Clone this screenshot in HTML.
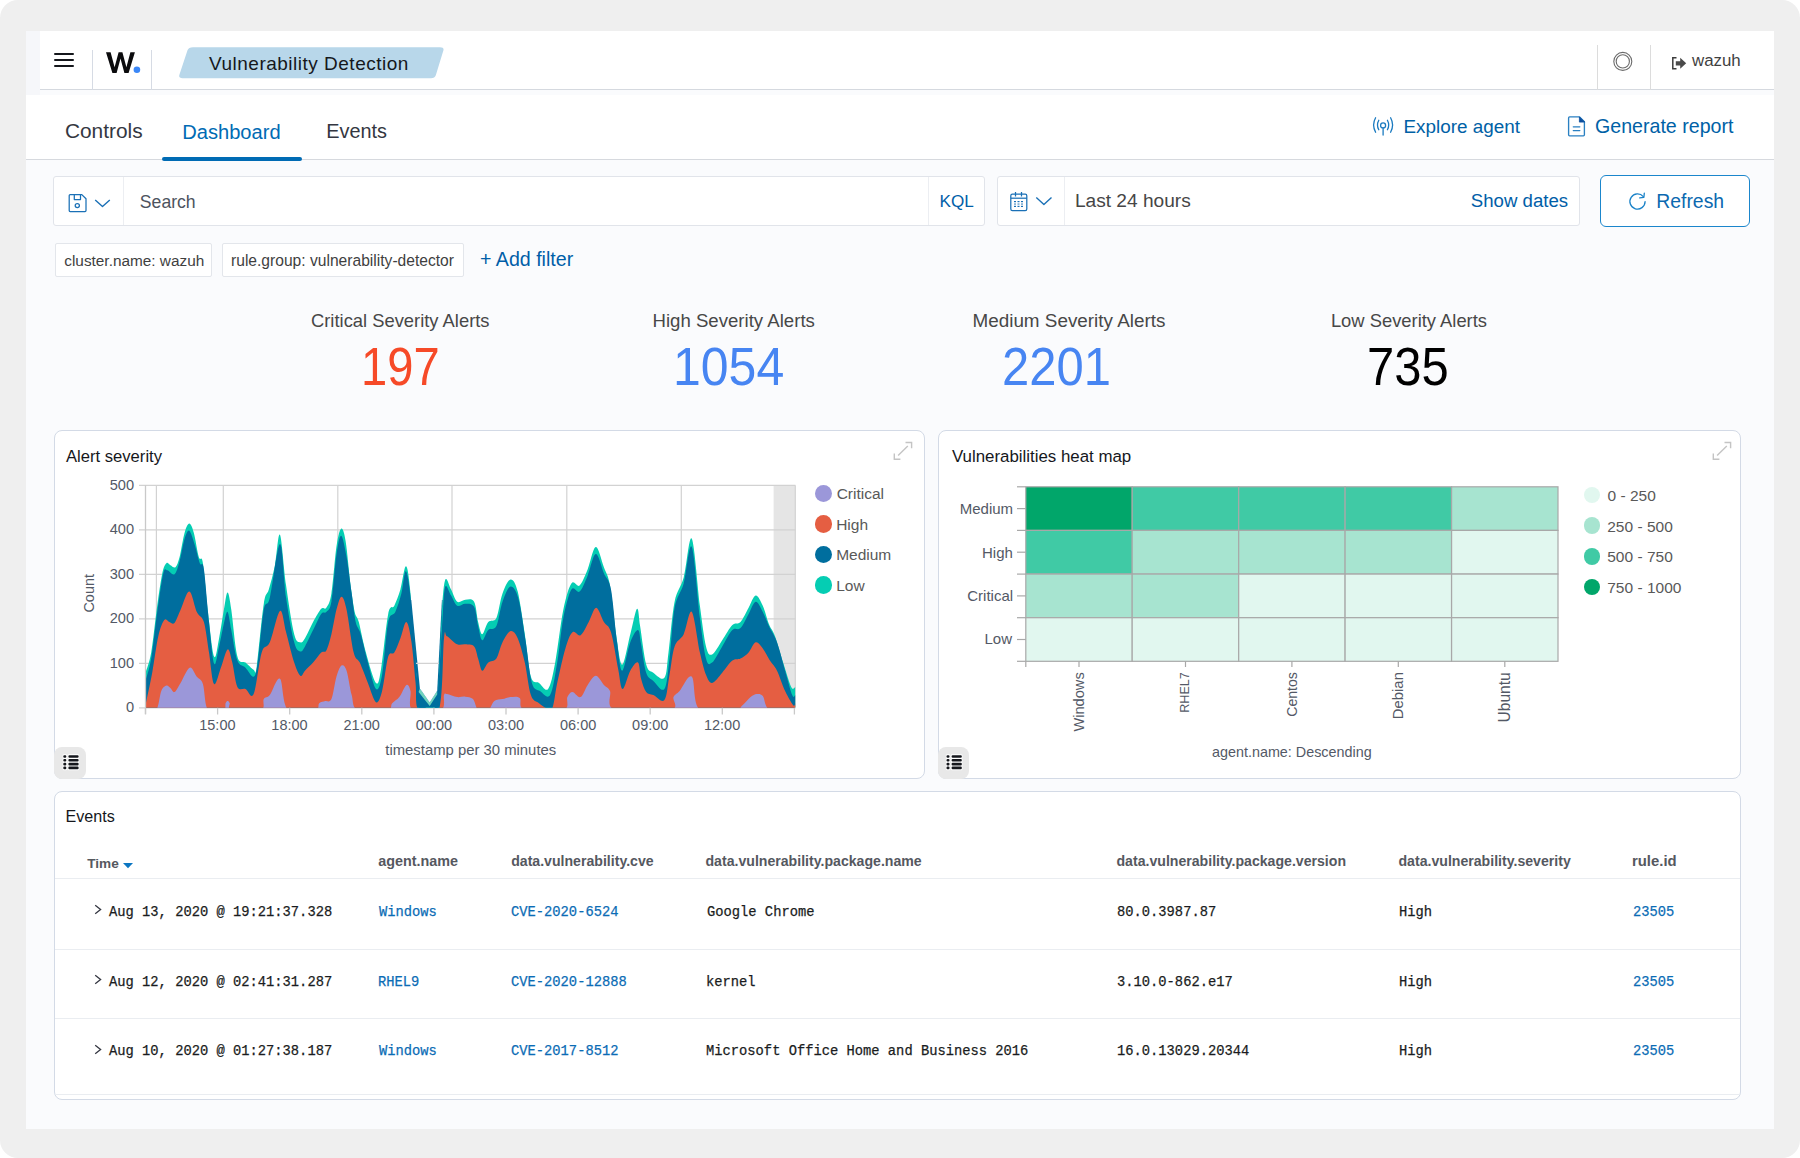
<!DOCTYPE html>
<html><head><meta charset="utf-8">
<style>
*{box-sizing:border-box;margin:0;padding:0}
html,body{width:1800px;height:1158px;overflow:hidden;background:#fff;font-family:"Liberation Sans",sans-serif;}
.abs{position:absolute}
.t{position:absolute;white-space:nowrap;line-height:1}
</style></head><body>
<div class="abs" style="left:0px;top:0px;width:1800px;height:1158px;background:#efefef;border-radius:18px"></div>
<div class="abs" style="left:26px;top:31px;width:1748px;height:1098px;background:#fafbfd"></div>
<div class="abs" style="left:40px;top:31px;width:1733.5px;height:59px;background:#fff;border-bottom:1.2px solid #d5d9df"></div>
<div class="abs" style="left:26px;top:31px;width:14px;height:64px;background:#f6f7fa"></div>
<div class="abs" style="left:26px;top:95px;width:1748px;height:65px;background:#fff;border-bottom:1.2px solid #d6d9de"></div>
<div class="abs" style="left:54.3px;top:52.6px;width:19.7px;height:2.3px;background:#15171c;border-radius:1px"></div>
<div class="abs" style="left:54.3px;top:58.8px;width:19.7px;height:2.3px;background:#15171c;border-radius:1px"></div>
<div class="abs" style="left:54.3px;top:65.0px;width:19.7px;height:2.3px;background:#15171c;border-radius:1px"></div>
<div class="abs" style="left:92px;top:50px;width:1px;height:39.5px;background:#d6dbe4"></div>
<div class="abs" style="left:151px;top:50px;width:1px;height:39.5px;background:#d6dbe4"></div>
<svg class="abs" style="left:0;top:0" width="1800" height="200" viewBox="0 0 1800 200">
<path d="M106,52.2 L110.6,52.2 L114.6,67.2 L118.6,52.2 L122.4,52.2 L126.4,67.2 L130.4,52.2 L134.9,52.2 L128.6,73 L124.4,73 L120.5,58.6 L116.6,73 L112.4,73 Z" fill="#0b0b0d"/>
<circle cx="136.9" cy="69.7" r="3.3" fill="#3b87f7"/>
<path d="M193,47.2 L440,47.2 Q444.5,47.2 443.3,50.8 L435.8,75.2 Q434.8,78.2 431,78.2 L182.5,78.2 Q178.3,78.2 179.4,74.8 L187.5,50.2 Q188.6,47.2 193,47.2 Z" fill="#b8d7ea"/>
<circle cx="1622.8" cy="61.4" r="9" fill="none" stroke="#6b6b6b" stroke-width="1.1"/>
<circle cx="1622.8" cy="61.4" r="6.6" fill="none" stroke="#6b6b6b" stroke-width="1.1"/>
<path d="M1676.5,57.8 L1672.8,57.8 L1672.8,68.8 L1676.5,68.8" fill="none" stroke="#3c3c3c" stroke-width="1.5"/>
<path d="M1675.8,61.2 L1680.2,61.2 L1680.2,57.8 L1686.2,63.3 L1680.2,68.8 L1680.2,65.4 L1675.8,65.4 Z" fill="#4a4a4a"/>
</svg>
<div class="t" style="left:209.00px;top:54.35px;font-size:19.00px;font-family:'Liberation Sans',sans-serif;color:#15171c;letter-spacing:0.500px;">Vulnerability Detection</div>
<div class="abs" style="left:1597px;top:45px;width:1px;height:44.5px;background:#dcdcdc"></div>
<div class="abs" style="left:1650px;top:45px;width:1px;height:44.5px;background:#dcdcdc"></div>
<div class="t" style="left:1692.00px;top:52.96px;font-size:16.87px;font-family:'Liberation Sans',sans-serif;color:#3f3f3f;">wazuh</div>
<div class="t" style="left:64.90px;top:121.06px;font-size:20.87px;font-family:'Liberation Sans',sans-serif;color:#343741;">Controls</div>
<div class="t" style="left:182.20px;top:121.69px;font-size:20.12px;font-family:'Liberation Sans',sans-serif;color:#006bb4;">Dashboard</div>
<div class="t" style="left:326.30px;top:121.91px;font-size:19.87px;font-family:'Liberation Sans',sans-serif;color:#343741;">Events</div>
<div class="abs" style="left:162px;top:157px;width:140px;height:3.5px;background:#006bb4;border-radius:2px"></div>
<svg class="abs" style="left:0;top:0" width="1800" height="300" viewBox="0 0 1800 300">
<g fill="none" stroke="#1a7ac0" stroke-width="1.3" stroke-linecap="round">
<circle cx="1383.1" cy="125.4" r="2.5"/>
<path d="M1383.1,127.9 L1383.1,135"/>
<path d="M1378.8,120.2 Q1376.2,125 1378.8,129.8"/>
<path d="M1387.4,120.2 Q1390,125 1387.4,129.8"/>
<path d="M1375.6,117.8 Q1371.6,125 1375.6,132.2"/>
<path d="M1390.6,117.8 Q1394.6,125 1390.6,132.2"/>
</g>
<g fill="none" stroke="#2a80c2" stroke-width="1.35" stroke-linejoin="round">
<path d="M1569.6,116.9 L1579.6,116.9 L1584.4,121.7 L1584.4,134.8 Q1584.4,135.8 1583.4,135.8 L1569.6,135.8 Q1568.6,135.8 1568.6,134.8 L1568.6,117.9 Q1568.6,116.9 1569.6,116.9 Z"/>
<path d="M1573.3,126.8 L1579.8,126.8 M1573.3,130.6 L1579.8,130.6" stroke-linecap="round"/>
</g>
<path d="M1579.4,116.9 L1584.6,122.1 L1579.4,122.1 Z" fill="#0d4f9e" stroke="#0d4f9e" stroke-width="0.8" stroke-linejoin="round"/>
</svg>
<div class="t" style="left:1403.50px;top:117.76px;font-size:18.87px;font-family:'Liberation Sans',sans-serif;color:#0061a6;">Explore agent</div>
<div class="t" style="left:1595.00px;top:117.12px;font-size:19.62px;font-family:'Liberation Sans',sans-serif;color:#0061a6;">Generate report</div>
<div class="abs" style="left:53px;top:176px;width:932px;height:50px;background:#fff;border:1px solid #e1e4ea;border-radius:3px"></div>
<div class="abs" style="left:123px;top:177px;width:1px;height:48px;background:#eceef2"></div>
<div class="abs" style="left:928px;top:177px;width:1px;height:48px;background:#eceef2"></div>
<div class="abs" style="left:997px;top:176px;width:583px;height:50px;background:#fff;border:1px solid #e1e4ea;border-radius:3px"></div>
<div class="abs" style="left:1064px;top:177px;width:1px;height:48px;background:#eceef2"></div>
<div class="abs" style="left:1600px;top:175px;width:150px;height:51.5px;background:#fff;border:1.6px solid #1b86cc;border-radius:6px"></div>
<svg class="abs" style="left:0;top:0" width="1800" height="300" viewBox="0 0 1800 300"><g fill="none" stroke="#1a70b6" stroke-width="1.25" stroke-linejoin="round">
<path d="M70.2,194.6 L81.8,194.6 L86,198.8 L86,210.5 Q86,211.5 85,211.5 L70.2,211.5 Q69.2,211.5 69.2,210.5 L69.2,195.6 Q69.2,194.6 70.2,194.6 Z"/>
<path d="M74.3,194.6 L74.3,199.6 L80.5,199.6 L80.5,194.6"/>
<circle cx="77.3" cy="205.6" r="2.1"/>
<path d="M95.2,200 L102.5,206.6 L109.8,200" stroke-width="1.4"/>
<rect x="1010.8" y="194.2" width="16" height="16.5" rx="1.6"/>
<path d="M1010.8,198.2 L1026.8,198.2"/>
<path d="M1015.5,192 L1015.5,196.6 M1021.5,192 L1021.5,196.6"/>
<path d="M1036.3,197.6 L1043.9,204.4 L1051.5,197.6" stroke-width="1.4"/>
</g>
<path d="M1645.1,201.6 A7.6,7.6 0 1 1 1643.3,196.6" fill="none" stroke="#1a82c8" stroke-width="1.3" stroke-linecap="round"/>
<path d="M1639.7,197.8 L1643.9,197.3 L1644.3,193.2" fill="none" stroke="#1a82c8" stroke-width="1.3" stroke-linecap="round" stroke-linejoin="round"/>
<g fill="#1a70b6">
<rect x="1014" y="201" width="2" height="1.2"/><rect x="1017.5" y="201" width="2" height="1.2"/><rect x="1021" y="201" width="2" height="1.2"/>
<rect x="1014" y="203.3" width="2" height="1.5" opacity="0.6"/><rect x="1017.5" y="203.3" width="2" height="1.5" opacity="0.6"/><rect x="1021" y="203.3" width="2" height="1.5" opacity="0.6"/>
<rect x="1014" y="205.8" width="2" height="1.2"/><rect x="1017.5" y="205.8" width="2" height="1.2"/><rect x="1021" y="205.8" width="2" height="1.2"/>
</g>
</svg>
<div class="t" style="left:139.85px;top:193.52px;font-size:17.62px;font-family:'Liberation Sans',sans-serif;color:#4d535e;">Search</div>
<div class="t" style="left:939.55px;top:193.44px;font-size:17.12px;font-family:'Liberation Sans',sans-serif;color:#005ea8;">KQL</div>
<div class="t" style="left:1074.90px;top:191.44px;font-size:19.12px;font-family:'Liberation Sans',sans-serif;color:#464646;">Last 24 hours</div>
<div class="t" style="left:1470.85px;top:192.17px;font-size:18.62px;font-family:'Liberation Sans',sans-serif;color:#005ea8;">Show dates</div>
<div class="t" style="left:1656.30px;top:192.03px;font-size:19.37px;font-family:'Liberation Sans',sans-serif;color:#0b69b0;">Refresh</div>
<div class="abs" style="left:55px;top:243px;width:157px;height:34px;background:#fff;border:1px solid #e3e6eb;border-radius:2px"></div>
<div class="abs" style="left:222px;top:243px;width:242px;height:34px;background:#fff;border:1px solid #e3e6eb;border-radius:2px"></div>
<div class="t" style="left:64.25px;top:253.13px;font-size:15.37px;font-family:'Liberation Sans',sans-serif;color:#3f3f3f;">cluster.name: wazuh</div>
<div class="t" style="left:231.00px;top:252.92px;font-size:15.62px;font-family:'Liberation Sans',sans-serif;color:#3f3f3f;">rule.group: vulnerability-detector</div>
<div class="t" style="left:480.00px;top:249.82px;font-size:19.62px;font-family:'Liberation Sans',sans-serif;color:#005ea8;">+ Add filter</div>
<div class="t" style="left:311.00px;top:311.98px;font-size:18.37px;font-family:'Liberation Sans',sans-serif;color:#474747;">Critical Severity Alerts</div>
<div class="t" style="left:652.50px;top:311.77px;font-size:18.62px;font-family:'Liberation Sans',sans-serif;color:#474747;">High Severity Alerts</div>
<div class="t" style="left:972.50px;top:311.56px;font-size:18.87px;font-family:'Liberation Sans',sans-serif;color:#474747;">Medium Severity Alerts</div>
<div class="t" style="left:1330.90px;top:311.98px;font-size:18.37px;font-family:'Liberation Sans',sans-serif;color:#474747;">Low Severity Alerts</div>
<div class="t" style="left:360.81px;top:338.60px;font-size:54.00px;font-family:'Liberation Sans',sans-serif;color:#f64a28;transform:scaleX(0.8733);transform-origin:0 0;">197</div>
<div class="t" style="left:673.30px;top:338.60px;font-size:54.00px;font-family:'Liberation Sans',sans-serif;color:#4785f2;transform:scaleX(0.9258);transform-origin:0 0;">1054</div>
<div class="t" style="left:1001.51px;top:338.60px;font-size:54.00px;font-family:'Liberation Sans',sans-serif;color:#4785f2;transform:scaleX(0.9063);transform-origin:0 0;">2201</div>
<div class="t" style="left:1366.51px;top:338.60px;font-size:54.00px;font-family:'Liberation Sans',sans-serif;color:#000;transform:scaleX(0.9059);transform-origin:0 0;">735</div>
<div class="abs" style="left:54px;top:430px;width:870.5px;height:348.8px;background:#fff;border:1px solid #d3dae6;border-radius:8px"></div>
<div class="abs" style="left:937.5px;top:430px;width:803.5px;height:348.8px;background:#fff;border:1px solid #d3dae6;border-radius:8px"></div>
<div class="abs" style="left:54px;top:791px;width:1687px;height:308.5px;background:#fff;border:1px solid #d3dae6;border-radius:8px"></div>
<div class="t" style="left:66.00px;top:448.97px;font-size:16.62px;font-family:'Liberation Sans',sans-serif;color:#15171c;">Alert severity</div>
<div class="t" style="left:951.90px;top:448.66px;font-size:16.87px;font-family:'Liberation Sans',sans-serif;color:#15171c;">Vulnerabilities heat map</div>
<svg class="abs" style="left:893px;top:441px" width="21" height="20" viewBox="0 0 21 20"><g fill="none" stroke="#c4c4c4" stroke-width="1.4" stroke-linecap="square"><path d="M5.6,14 L14.3,5.4"/><path d="M13.2,1.5 L18.6,1.5 L18.6,6.6"/><path d="M1.3,13.3 L1.3,18.3 L6.7,18.3"/></g></svg>
<svg class="abs" style="left:1712px;top:441px" width="21" height="20" viewBox="0 0 21 20"><g fill="none" stroke="#c4c4c4" stroke-width="1.4" stroke-linecap="square"><path d="M5.6,14 L14.3,5.4"/><path d="M13.2,1.5 L18.6,1.5 L18.6,6.6"/><path d="M1.3,13.3 L1.3,18.3 L6.7,18.3"/></g></svg>
<div class="abs" style="left:54.4px;top:747.3px;width:31.3px;height:31.3px;background:#e8e8e8;border-radius:8px"></div>
<svg class="abs" style="left:0;top:0" width="1800" height="1158" viewBox="0 0 1800 1158"><rect x="62.7" y="754.2" width="4.4" height="4.6" rx="1.2" fill="#fff"/><rect x="67.6" y="754.2" width="11.6" height="4.6" rx="1.2" fill="#fff"/><rect x="62.7" y="758.0" width="4.4" height="4.6" rx="1.2" fill="#fff"/><rect x="67.6" y="758.0" width="11.6" height="4.6" rx="1.2" fill="#fff"/><rect x="62.7" y="761.8" width="4.4" height="4.6" rx="1.2" fill="#fff"/><rect x="67.6" y="761.8" width="11.6" height="4.6" rx="1.2" fill="#fff"/><rect x="62.7" y="765.6" width="4.4" height="4.6" rx="1.2" fill="#fff"/><rect x="67.6" y="765.6" width="11.6" height="4.6" rx="1.2" fill="#fff"/><rect x="63.3" y="755.2" width="3" height="2.6" rx="1" fill="#15171c"/><rect x="68.4" y="755.2" width="10.2" height="2.6" rx="1" fill="#15171c"/><rect x="63.3" y="759.0" width="3" height="2.6" rx="1" fill="#15171c"/><rect x="68.4" y="759.0" width="10.2" height="2.6" rx="1" fill="#15171c"/><rect x="63.3" y="762.8" width="3" height="2.6" rx="1" fill="#15171c"/><rect x="68.4" y="762.8" width="10.2" height="2.6" rx="1" fill="#15171c"/><rect x="63.3" y="766.6" width="3" height="2.6" rx="1" fill="#15171c"/><rect x="68.4" y="766.6" width="10.2" height="2.6" rx="1" fill="#15171c"/></svg>
<div class="abs" style="left:937.6px;top:747.3px;width:31.3px;height:31.3px;background:#e8e8e8;border-radius:8px"></div>
<svg class="abs" style="left:0;top:0" width="1800" height="1158" viewBox="0 0 1800 1158"><rect x="945.9" y="754.2" width="4.4" height="4.6" rx="1.2" fill="#fff"/><rect x="950.8" y="754.2" width="11.6" height="4.6" rx="1.2" fill="#fff"/><rect x="945.9" y="758.0" width="4.4" height="4.6" rx="1.2" fill="#fff"/><rect x="950.8" y="758.0" width="11.6" height="4.6" rx="1.2" fill="#fff"/><rect x="945.9" y="761.8" width="4.4" height="4.6" rx="1.2" fill="#fff"/><rect x="950.8" y="761.8" width="11.6" height="4.6" rx="1.2" fill="#fff"/><rect x="945.9" y="765.6" width="4.4" height="4.6" rx="1.2" fill="#fff"/><rect x="950.8" y="765.6" width="11.6" height="4.6" rx="1.2" fill="#fff"/><rect x="946.5" y="755.2" width="3" height="2.6" rx="1" fill="#15171c"/><rect x="951.6" y="755.2" width="10.2" height="2.6" rx="1" fill="#15171c"/><rect x="946.5" y="759.0" width="3" height="2.6" rx="1" fill="#15171c"/><rect x="951.6" y="759.0" width="10.2" height="2.6" rx="1" fill="#15171c"/><rect x="946.5" y="762.8" width="3" height="2.6" rx="1" fill="#15171c"/><rect x="951.6" y="762.8" width="10.2" height="2.6" rx="1" fill="#15171c"/><rect x="946.5" y="766.6" width="3" height="2.6" rx="1" fill="#15171c"/><rect x="951.6" y="766.6" width="10.2" height="2.6" rx="1" fill="#15171c"/></svg>
<svg class="abs" style="left:0;top:0" width="1800" height="1158" viewBox="0 0 1800 1158">
<rect x="773.6" y="485.4" width="21.7" height="221.6" fill="#e5e5e5"/>
<line x1="139" y1="485.4" x2="795.5" y2="485.4" stroke="#d2d2d2" stroke-width="1.2"/>
<line x1="139" y1="529.9" x2="795.5" y2="529.9" stroke="#d2d2d2" stroke-width="1.2"/>
<line x1="139" y1="574.4" x2="795.5" y2="574.4" stroke="#d2d2d2" stroke-width="1.2"/>
<line x1="139" y1="618.8" x2="795.5" y2="618.8" stroke="#d2d2d2" stroke-width="1.2"/>
<line x1="139" y1="663.3" x2="795.5" y2="663.3" stroke="#d2d2d2" stroke-width="1.2"/>
<line x1="139" y1="707.8" x2="795.5" y2="707.8" stroke="#d2d2d2" stroke-width="1.2"/>
<line x1="156.4" y1="485.4" x2="156.4" y2="707" stroke="#d2d2d2" stroke-width="1.2"/>
<line x1="223.3" y1="485.4" x2="223.3" y2="707" stroke="#d2d2d2" stroke-width="1.2"/>
<line x1="337.8" y1="485.4" x2="337.8" y2="707" stroke="#d2d2d2" stroke-width="1.2"/>
<line x1="452" y1="485.4" x2="452" y2="707" stroke="#d2d2d2" stroke-width="1.2"/>
<line x1="566.8" y1="485.4" x2="566.8" y2="707" stroke="#d2d2d2" stroke-width="1.2"/>
<line x1="681.3" y1="485.4" x2="681.3" y2="707" stroke="#d2d2d2" stroke-width="1.2"/>
<line x1="795.3" y1="485.4" x2="795.3" y2="707" stroke="#d2d2d2" stroke-width="1.2"/>
<defs><clipPath id="ca"><rect x="144.8" y="480" width="650.7" height="227.8"/></clipPath></defs><g clip-path="url(#ca)">
<path d="M145.5,710.0 L145.5,672.7 C146.4,669.4 149.2,663.6 151.2,652.4 C153.1,641.3 155.4,619.0 157.2,605.8 C159.1,592.6 160.8,580.4 162.3,573.3 C163.8,566.2 165.0,564.5 166.4,563.2 C167.7,561.8 168.9,564.5 170.4,565.2 C172.0,565.9 174.0,568.6 175.5,567.2 C177.0,565.9 178.0,562.8 179.6,557.1 C181.1,551.3 183.0,538.3 184.6,532.7 C186.3,527.2 187.8,523.6 189.3,523.6 C190.8,523.6 192.2,527.2 193.8,532.7 C195.4,538.3 197.3,552.0 198.8,557.1 C200.4,562.2 201.4,554.1 202.9,563.2 C204.4,572.3 206.1,596.3 208.0,611.9 C209.8,627.4 212.2,652.1 214.1,656.5 C215.9,660.9 217.4,646.4 219.1,638.2 C220.8,630.1 222.8,615.4 224.2,607.8 C225.6,600.2 226.5,592.3 227.6,592.6 C228.8,592.9 229.7,599.2 231.3,609.8 C232.9,620.5 235.0,647.7 237.4,656.5 C239.7,665.3 242.8,660.4 245.5,662.6 C248.2,664.8 251.8,669.0 253.6,669.7 C255.5,670.4 255.0,677.6 256.7,666.7 C258.3,655.7 261.7,616.6 263.8,603.8 C265.8,590.9 267.0,596.0 268.8,589.6 C270.7,583.1 273.1,574.3 274.9,565.2 C276.8,556.1 278.1,531.4 280.0,534.8 C281.8,538.2 283.7,568.9 286.1,585.5 C288.4,602.1 291.8,624.7 294.2,634.2 C296.6,643.7 298.5,641.6 300.3,642.3 C302.1,643.0 302.9,641.6 305.0,638.2 C307.1,634.9 310.4,626.9 313.1,622.0 C315.8,617.1 319.0,611.2 321.2,608.8 C323.4,606.5 324.6,610.4 326.3,607.8 C328.0,605.3 329.7,603.8 331.4,593.6 C333.1,583.5 334.8,557.8 336.4,547.0 C338.1,536.1 339.6,529.7 341.1,528.7 C342.6,527.7 344.0,531.4 345.6,540.9 C347.2,550.3 349.1,573.7 350.6,585.5 C352.2,597.3 353.4,605.8 354.7,611.9 C356.1,618.0 356.9,615.3 358.8,622.0 C360.6,628.8 363.0,642.3 365.9,652.4 C368.7,662.6 373.5,680.2 376.0,682.9 C378.5,685.6 379.1,680.2 381.1,668.7 C383.1,657.2 386.0,624.4 388.2,613.9 C390.4,603.4 392.2,609.8 394.3,605.8 C396.3,601.7 398.4,596.1 400.4,589.6 C402.3,583.0 404.3,565.5 406.0,566.2 C407.7,566.9 408.7,574.8 410.5,593.6 C412.3,612.4 414.6,661.9 416.6,678.8 C418.6,695.7 420.5,691.2 422.7,695.1 C424.9,698.9 427.4,702.2 429.8,702.2 C432.1,702.2 435.0,708.4 436.9,695.1 C438.7,681.7 439.6,641.1 440.9,622.0 C442.3,602.9 443.3,585.8 445.0,580.4 C446.7,575.0 449.0,586.0 451.1,589.6 C453.1,593.1 454.8,600.0 457.2,601.7 C459.5,603.4 462.5,599.7 465.3,599.7 C468.1,599.7 471.9,598.0 474.1,601.7 C476.2,605.4 476.8,616.6 478.1,622.0 C479.5,627.4 480.5,634.2 482.2,634.2 C483.9,634.2 485.9,624.7 488.3,622.0 C490.6,619.3 494.0,622.7 496.4,618.0 C498.7,613.2 500.1,600.0 502.5,593.6 C504.8,587.2 508.0,579.7 510.6,579.4 C513.1,579.1 515.3,582.5 517.7,591.6 C520.0,600.7 522.6,620.0 524.8,634.2 C527.0,648.4 528.5,668.7 530.9,676.8 C533.2,684.9 536.1,680.9 539.0,682.9 C541.9,684.9 545.4,692.3 548.1,689.0 C550.8,685.6 552.7,675.8 555.2,662.6 C557.7,649.4 560.6,623.0 563.3,609.8 C566.0,596.7 568.7,587.5 571.4,583.5 C574.1,579.4 576.9,587.9 579.6,585.5 C582.3,583.1 585.0,575.7 587.7,569.3 C590.4,562.8 593.1,547.3 595.8,547.0 C598.5,546.6 601.5,560.8 603.9,567.2 C606.3,573.7 608.0,574.3 610.0,585.5 C612.0,596.7 614.0,621.0 616.1,634.2 C618.1,647.4 619.8,664.6 622.2,664.6 C624.5,664.6 627.8,643.5 630.3,634.2 C632.8,624.9 635.4,610.2 637.0,608.8 C638.7,607.5 638.6,616.8 640.1,626.1 C641.6,635.4 644.0,656.8 646.2,664.6 C648.4,672.4 650.2,670.5 653.3,672.7 C656.3,674.9 661.9,681.2 664.4,677.8 C667.0,674.4 666.8,665.1 668.5,652.4 C670.2,639.8 672.0,614.2 674.6,601.7 C677.1,589.2 680.8,587.9 683.7,577.4 C686.6,566.9 689.1,534.1 691.8,538.8 C694.5,543.6 697.6,587.9 699.9,605.8 C702.3,623.7 704.0,638.2 706.0,646.4 C708.0,654.5 709.4,655.5 712.1,654.5 C714.8,653.5 718.9,645.2 722.2,640.3 C725.6,635.4 729.3,628.1 732.4,625.1 C735.4,622.0 737.8,624.9 740.5,622.0 C743.2,619.1 746.1,612.2 748.6,607.8 C751.1,603.4 753.3,596.0 755.7,595.6 C758.1,595.3 760.6,601.1 762.8,605.8 C765.0,610.5 766.9,619.0 768.9,624.0 C770.9,629.1 772.6,629.8 775.0,636.2 C777.4,642.6 780.4,654.1 783.1,662.6 C785.8,671.0 789.2,682.9 791.2,686.9 C793.2,691.0 794.6,686.9 795.3,686.9 L795.3,710.0 Z" fill="#05cdb3"/>
<path d="M145.5,710.0 L145.5,680.9 C146.4,677.1 149.2,670.0 151.2,658.5 C153.1,647.0 155.2,626.1 157.2,611.9 C159.3,597.7 161.6,580.3 163.3,573.3 C165.0,566.4 165.5,570.1 167.4,570.3 C169.2,570.5 172.5,575.9 174.5,574.3 C176.5,572.8 177.9,567.1 179.6,561.2 C181.3,555.2 183.0,543.9 184.6,538.8 C186.3,533.8 187.6,529.7 189.3,530.7 C191.0,531.7 193.0,539.5 194.8,544.9 C196.5,550.3 198.3,559.1 199.8,563.2 C201.4,567.2 202.4,559.5 203.9,569.3 C205.4,579.1 207.3,606.3 209.0,622.0 C210.7,637.7 212.4,659.5 214.1,663.6 C215.7,667.7 217.4,653.3 219.1,646.4 C220.8,639.4 222.8,627.8 224.2,622.0 C225.6,616.3 226.5,610.5 227.6,611.9 C228.8,613.2 229.7,622.0 231.3,630.1 C232.9,638.2 235.0,654.3 237.4,660.6 C239.7,666.8 242.8,665.0 245.5,667.7 C248.2,670.4 251.6,677.6 253.6,676.8 C255.6,675.9 256.0,673.8 257.7,662.6 C259.4,651.4 261.7,620.7 263.8,609.8 C265.8,599.0 267.1,608.7 269.8,597.7 C272.5,586.7 277.3,543.9 280.0,543.9 C282.7,543.9 283.7,581.3 286.1,597.7 C288.4,614.1 291.8,633.3 294.2,642.3 C296.6,651.3 298.5,650.8 300.3,651.4 C302.1,652.1 302.9,649.9 305.0,646.4 C307.1,642.8 310.4,635.5 313.1,630.1 C315.8,624.7 319.0,616.9 321.2,613.9 C323.4,610.9 324.6,613.9 326.3,611.9 C328.0,609.8 329.7,611.2 331.4,601.7 C333.1,592.3 334.8,566.1 336.4,555.1 C338.1,544.1 339.4,535.5 341.1,535.8 C342.8,536.1 344.8,547.5 346.6,557.1 C348.3,566.7 350.1,582.8 351.7,593.6 C353.2,604.4 354.2,615.3 355.7,622.0 C357.2,628.8 358.8,627.4 360.8,634.2 C362.8,641.0 365.4,653.5 367.9,662.6 C370.4,671.7 373.6,686.9 376.0,689.0 C378.4,691.0 380.1,685.9 382.1,674.8 C384.1,663.6 386.0,632.5 388.2,622.0 C390.4,611.5 393.1,616.6 395.3,611.9 C397.5,607.1 399.6,600.4 401.4,593.6 C403.2,586.9 404.3,569.3 406.0,571.3 C407.7,573.3 409.6,587.2 411.5,605.8 C413.4,624.4 415.7,666.8 417.6,682.9 C419.5,698.9 420.6,697.6 422.7,702.2 C424.7,706.7 427.4,710.0 429.8,710.0 C432.1,710.0 434.8,710.0 436.9,702.2 C438.9,688.5 440.6,647.2 441.9,628.1 C443.3,609.0 443.5,592.9 445.0,587.5 C446.5,582.1 449.0,592.6 451.1,595.6 C453.1,598.7 454.8,604.4 457.2,605.8 C459.5,607.1 462.5,603.6 465.3,603.8 C468.1,603.9 471.9,603.1 474.1,606.8 C476.2,610.5 476.8,620.5 478.1,626.1 C479.5,631.7 480.5,639.6 482.2,640.3 C483.9,641.0 485.9,632.5 488.3,630.1 C490.6,627.8 494.0,630.8 496.4,626.1 C498.7,621.3 500.1,608.3 502.5,601.7 C504.8,595.1 507.9,586.9 510.6,586.5 C513.3,586.2 516.2,590.4 518.7,599.7 C521.2,609.0 523.6,628.4 525.8,642.3 C528.0,656.2 529.5,674.8 531.9,682.9 C534.2,691.0 537.0,689.0 540.0,691.0 C543.0,693.0 547.3,699.8 550.1,695.1 C553.0,690.3 555.0,675.4 557.2,662.6 C559.4,649.7 561.0,630.1 563.3,618.0 C565.7,605.8 568.7,594.0 571.4,589.6 C574.1,585.2 576.9,594.0 579.6,591.6 C582.3,589.2 585.0,581.6 587.7,575.4 C590.4,569.1 593.1,554.4 595.8,554.1 C598.5,553.7 601.4,567.4 603.9,573.3 C606.4,579.2 608.8,578.1 611.0,589.6 C613.2,601.1 615.2,628.8 617.1,642.3 C618.9,655.8 620.0,670.7 622.2,670.7 C624.4,670.7 627.6,649.1 630.3,642.3 C632.9,635.5 636.2,629.8 638.0,630.1 C639.8,630.5 639.7,637.2 641.1,644.3 C642.4,651.4 644.1,666.7 646.2,672.7 C648.2,678.8 650.2,678.1 653.3,680.9 C656.3,683.6 661.7,692.7 664.4,689.0 C667.1,685.2 667.8,672.1 669.5,658.5 C671.2,645.0 672.2,620.3 674.6,607.8 C676.9,595.3 680.8,593.6 683.7,583.5 C686.6,573.3 689.1,541.2 691.8,547.0 C694.5,552.7 697.6,599.4 699.9,618.0 C702.3,636.6 704.0,651.1 706.0,658.5 C708.0,666.0 709.4,664.6 712.1,662.6 C714.8,660.6 718.9,651.8 722.2,646.4 C725.6,641.0 729.3,633.2 732.4,630.1 C735.4,627.1 737.8,630.8 740.5,628.1 C743.2,625.4 746.1,618.3 748.6,613.9 C751.1,609.5 753.3,602.1 755.7,601.7 C758.1,601.4 760.4,607.5 762.8,611.9 C765.2,616.3 767.5,623.0 769.9,628.1 C772.3,633.2 774.5,635.2 777.0,642.3 C779.6,649.4 782.6,661.9 785.1,670.7 C787.7,679.5 790.5,691.0 792.2,695.1 C793.9,699.1 794.8,695.1 795.3,695.1 L795.3,710.0 Z" fill="#006e9e"/>
<path d="M145.5,710.0 L145.5,705.2 C146.6,699.8 150.0,684.2 152.2,672.7 C154.3,661.2 156.2,645.0 158.3,636.2 C160.3,627.4 162.5,622.4 164.3,620.0 C166.2,617.6 167.7,621.5 169.4,622.0 C171.1,622.5 172.6,625.1 174.5,623.0 C176.3,621.0 178.1,615.1 180.6,609.8 C183.0,604.6 186.6,591.2 189.3,591.6 C192.0,591.9 194.4,606.8 196.8,611.9 C199.2,616.9 201.9,615.3 203.9,622.0 C205.9,628.8 207.3,642.1 209.0,652.4 C210.7,662.8 212.0,681.5 214.1,683.9 C216.1,686.3 218.9,672.4 221.2,666.7 C223.4,660.9 225.8,650.1 227.6,649.4 C229.5,648.7 230.7,656.3 232.3,662.6 C233.9,668.8 235.2,682.5 237.4,686.9 C239.6,691.3 242.8,687.8 245.5,689.0 C248.2,690.2 250.9,700.1 253.6,694.0 C256.3,688.0 259.0,661.1 261.7,652.4 C264.4,643.8 266.8,649.2 269.8,642.3 C272.9,635.4 277.3,612.5 280.0,610.9 C282.7,609.2 283.7,623.5 286.1,632.2 C288.4,640.8 291.8,655.3 294.2,662.6 C296.6,669.9 298.5,674.4 300.3,675.8 C302.1,677.1 302.9,672.9 305.0,670.7 C307.1,668.5 310.4,665.6 313.1,662.6 C315.8,659.5 319.0,654.5 321.2,652.4 C323.4,650.4 324.6,653.5 326.3,650.4 C328.0,647.4 329.7,641.0 331.4,634.2 C333.1,627.4 334.8,616.1 336.4,609.8 C338.1,603.6 339.8,596.7 341.5,596.7 C343.2,596.7 344.6,600.5 346.6,609.8 C348.6,619.1 351.5,643.7 353.7,652.4 C355.9,661.2 357.4,657.5 359.8,662.6 C362.1,667.7 365.2,676.3 367.9,682.9 C370.6,689.5 373.6,700.8 376.0,702.2 C378.4,703.5 380.1,698.6 382.1,691.0 C384.1,683.4 386.2,662.9 388.2,656.5 C390.2,650.1 392.2,655.5 394.3,652.4 C396.3,649.4 398.3,643.3 400.4,638.2 C402.4,633.2 404.6,621.3 406.4,622.0 C408.3,622.7 410.0,632.2 411.5,642.3 C413.0,652.4 414.4,671.6 415.6,682.9 C416.8,694.2 414.7,705.5 418.6,710.0 C422.5,710.0 434.7,710.0 438.9,710.0 C443.1,698.1 442.6,650.5 444.0,638.2 C445.3,625.9 444.8,635.2 447.0,636.2 C449.2,637.2 454.1,643.0 457.2,644.3 C460.2,645.7 462.5,644.0 465.3,644.3 C468.1,644.7 471.9,644.0 474.1,646.4 C476.2,648.7 476.8,654.5 478.1,658.5 C479.5,662.6 480.5,670.0 482.2,670.7 C483.9,671.4 485.9,664.6 488.3,662.6 C490.6,660.6 494.0,661.9 496.4,658.5 C498.7,655.2 500.1,646.9 502.5,642.3 C504.8,637.7 508.0,631.8 510.6,631.1 C513.1,630.5 515.3,633.0 517.7,638.2 C520.0,643.5 522.6,653.1 524.8,662.6 C527.0,672.1 528.5,688.3 530.9,695.1 C533.2,701.8 535.6,700.7 539.0,703.2 C542.4,705.7 548.1,710.0 551.2,710.0 C554.2,706.6 554.9,693.2 557.2,682.9 C559.6,672.6 562.8,656.8 565.4,648.4 C567.9,639.9 569.9,634.4 572.5,632.2 C575.0,630.0 577.9,636.9 580.6,635.2 C583.3,633.5 586.1,626.6 588.7,622.0 C591.3,617.5 593.7,607.8 596.2,607.8 C598.7,607.8 601.4,618.0 603.9,622.0 C606.4,626.1 608.6,624.4 611.0,632.2 C613.4,639.9 616.2,659.2 618.1,668.7 C620.0,678.1 620.5,688.6 622.6,689.0 C624.6,689.3 627.7,675.1 630.3,670.7 C632.9,666.3 636.2,661.2 638.0,662.6 C639.8,663.9 639.7,673.9 641.1,678.8 C642.4,683.7 644.1,689.3 646.2,692.0 C648.2,694.7 650.2,693.7 653.3,695.1 C656.3,696.4 661.7,703.5 664.4,700.1 C667.1,696.7 667.8,683.7 669.5,674.8 C671.2,665.8 672.2,653.1 674.6,646.4 C676.9,639.6 680.8,639.9 683.7,634.2 C686.6,628.4 689.1,608.8 691.8,611.9 C694.5,614.9 697.6,642.0 699.9,652.4 C702.3,662.9 704.0,669.7 706.0,674.8 C708.0,679.8 709.4,683.2 712.1,682.9 C714.8,682.5 718.9,676.5 722.2,672.7 C725.6,669.0 729.3,662.9 732.4,660.6 C735.4,658.2 737.8,659.9 740.5,658.5 C743.2,657.2 746.1,655.2 748.6,652.4 C751.1,649.7 753.3,643.0 755.7,642.3 C758.1,641.6 760.4,645.3 762.8,648.4 C765.2,651.4 767.5,656.8 769.9,660.6 C772.3,664.3 774.5,665.6 777.0,670.7 C779.6,675.8 782.4,685.2 785.1,691.0 C787.8,696.7 791.6,703.2 793.2,705.2 C794.9,707.2 794.9,703.5 795.3,703.2 L795.3,710.0 Z" fill="#e55e42"/>
<path d="M145.5,710.0 L145.5,710.0 C147.3,710.0 153.6,710.0 156.2,710.0 C158.9,706.9 159.6,695.1 161.3,691.0 C163.0,686.9 164.9,686.0 166.4,685.5 C167.9,685.0 169.1,686.9 170.4,688.0 C171.8,689.0 172.8,692.9 174.5,692.0 C176.2,691.2 178.0,686.9 180.6,682.9 C183.1,678.8 187.0,668.7 189.7,667.7 C192.4,666.7 194.6,674.1 196.8,676.8 C199.0,679.5 201.0,678.4 202.9,683.9 C204.8,689.4 204.5,705.7 208.0,710.0 C211.4,710.0 220.6,710.0 223.6,710.0 C226.5,708.9 224.9,704.6 225.6,703.2 C226.3,701.7 227.0,701.1 227.6,701.1 C228.3,701.1 229.0,701.7 229.7,703.2 C230.3,704.6 226.5,708.9 231.7,710.0 C236.9,710.0 255.4,710.0 260.7,710.0 C266.1,708.2 262.2,701.6 263.8,699.1 C265.3,696.6 267.1,698.4 269.8,695.1 C272.5,691.7 276.9,676.3 280.0,678.8 C283.0,681.3 282.2,704.8 288.1,710.0 C294.0,710.0 310.0,710.0 315.1,710.0 C320.3,708.9 317.5,704.6 319.2,703.2 C320.9,701.7 323.3,701.8 325.3,701.1 C327.3,700.5 329.5,703.2 331.4,699.1 C333.2,695.1 334.8,682.4 336.4,676.8 C338.1,671.2 339.8,666.7 341.5,665.6 C343.2,664.6 344.9,665.8 346.6,670.7 C348.3,675.6 349.8,688.5 351.7,695.1 C353.5,701.6 351.8,707.5 357.7,710.0 C363.7,710.0 381.4,710.0 387.2,710.0 C392.9,708.9 390.2,705.3 392.2,703.2 C394.3,701.0 397.0,700.1 399.3,697.1 C401.7,694.0 404.6,685.9 406.4,684.9 C408.3,683.9 409.5,686.8 410.5,691.0 C411.5,695.2 407.5,706.9 412.5,710.0 C417.6,710.0 435.7,710.0 440.9,710.0 C446.2,707.5 443.0,697.7 444.0,695.1 C445.0,692.4 444.8,693.7 447.0,694.0 C449.2,694.4 454.1,696.6 457.2,697.1 C460.2,697.5 462.6,696.3 465.3,696.7 C467.9,697.0 470.9,696.9 473.0,699.1 C475.2,701.3 475.6,708.2 478.1,710.0 C480.7,710.0 485.6,710.0 488.3,710.0 C491.0,708.5 492.0,703.0 494.3,701.1 C496.7,699.3 499.8,699.8 502.5,699.1 C505.2,698.4 507.7,697.3 510.6,697.1 C513.5,696.9 517.3,695.9 519.7,698.1 C522.1,700.3 517.5,708.0 524.8,710.0 C532.0,710.0 556.2,710.0 563.3,710.0 C570.4,707.9 565.9,700.1 567.4,697.1 C568.9,694.1 570.3,692.0 572.5,692.0 C574.7,692.0 578.0,698.3 580.6,697.1 C583.1,695.9 585.1,688.5 587.7,684.9 C590.2,681.4 593.1,675.8 595.8,675.8 C598.5,675.8 601.5,682.4 603.9,684.9 C606.3,687.4 608.1,686.8 610.0,691.0 C611.8,695.2 605.0,706.9 615.1,710.0 C625.1,710.0 660.8,710.0 670.5,710.0 C680.3,707.9 672.0,700.3 673.5,697.1 C675.1,693.9 676.6,694.4 679.6,691.0 C682.7,687.6 688.4,673.6 691.8,676.8 C695.2,680.0 692.8,704.5 699.9,710.0 C707.0,710.0 727.3,710.0 734.4,710.0 C741.5,709.2 739.8,707.4 742.5,705.2 C745.2,703.0 748.3,698.9 750.6,697.1 C753.0,695.2 754.7,694.2 756.7,694.0 C758.8,693.9 760.6,693.4 762.8,696.1 C765.0,698.7 764.5,707.7 769.9,710.0 C775.3,710.0 791.0,710.0 795.3,710.0 L795.3,710.0 Z" fill="#9b97d9"/>
<path d="M410.2,600 L418.9,707.8 L437.6,707.8 L442.5,600 Z" fill="#006e9e"/>
<path d="M418.6,692 L429.7,706 L437.2,694.6 L437.2,690.8 L429.7,702.4 L419.9,688.6 Z" fill="#6fd3bd"/>
<path d="M411.3,600 L419.9,688.6 L429.7,702.4 L437.2,690.8 L441.9,600 Z" fill="#ffffff"/>
<line x1="416" y1="663.3" x2="439" y2="663.3" stroke="#d2d2d2" stroke-width="1.2"/>
</g>
<line x1="145.5" y1="485.4" x2="145.5" y2="714" stroke="#c9c9c9" stroke-width="1.3"/>
<line x1="145.5" y1="707.8" x2="145.5" y2="714.5" stroke="#c9c9c9" stroke-width="1.3"/>
<line x1="217.6" y1="707.8" x2="217.6" y2="714.5" stroke="#c9c9c9" stroke-width="1.3"/>
<line x1="289.7" y1="707.8" x2="289.7" y2="714.5" stroke="#c9c9c9" stroke-width="1.3"/>
<line x1="361.8" y1="707.8" x2="361.8" y2="714.5" stroke="#c9c9c9" stroke-width="1.3"/>
<line x1="433.9" y1="707.8" x2="433.9" y2="714.5" stroke="#c9c9c9" stroke-width="1.3"/>
<line x1="506.0" y1="707.8" x2="506.0" y2="714.5" stroke="#c9c9c9" stroke-width="1.3"/>
<line x1="578.1" y1="707.8" x2="578.1" y2="714.5" stroke="#c9c9c9" stroke-width="1.3"/>
<line x1="650.2" y1="707.8" x2="650.2" y2="714.5" stroke="#c9c9c9" stroke-width="1.3"/>
<line x1="722.3" y1="707.8" x2="722.3" y2="714.5" stroke="#c9c9c9" stroke-width="1.3"/>
<line x1="794.4" y1="707.8" x2="794.4" y2="714.5" stroke="#c9c9c9" stroke-width="1.3"/>
</svg>
<div class="t" style="left:109.75px;top:477.89px;font-size:14.60px;font-family:'Liberation Sans',sans-serif;color:#535966;">500</div>
<div class="t" style="left:109.75px;top:522.37px;font-size:14.60px;font-family:'Liberation Sans',sans-serif;color:#535966;">400</div>
<div class="t" style="left:109.75px;top:566.85px;font-size:14.60px;font-family:'Liberation Sans',sans-serif;color:#535966;">300</div>
<div class="t" style="left:109.75px;top:611.33px;font-size:14.60px;font-family:'Liberation Sans',sans-serif;color:#535966;">200</div>
<div class="t" style="left:109.75px;top:655.81px;font-size:14.60px;font-family:'Liberation Sans',sans-serif;color:#535966;">100</div>
<div class="t" style="left:126.00px;top:700.29px;font-size:14.60px;font-family:'Liberation Sans',sans-serif;color:#535966;">0</div>
<div class="t" style="left:59px;top:586px;width:60px;text-align:center;font-size:14.5px;color:#535966;transform:rotate(-90deg)">Count</div>
<div class="t" style="left:199.22px;top:717.88px;font-size:14.50px;font-family:'Liberation Sans',sans-serif;color:#535966;">15:00</div>
<div class="t" style="left:271.32px;top:717.88px;font-size:14.50px;font-family:'Liberation Sans',sans-serif;color:#535966;">18:00</div>
<div class="t" style="left:343.55px;top:717.88px;font-size:14.50px;font-family:'Liberation Sans',sans-serif;color:#535966;">21:00</div>
<div class="t" style="left:415.77px;top:717.88px;font-size:14.50px;font-family:'Liberation Sans',sans-serif;color:#535966;">00:00</div>
<div class="t" style="left:487.88px;top:717.88px;font-size:14.50px;font-family:'Liberation Sans',sans-serif;color:#535966;">03:00</div>
<div class="t" style="left:559.97px;top:717.88px;font-size:14.50px;font-family:'Liberation Sans',sans-serif;color:#535966;">06:00</div>
<div class="t" style="left:632.07px;top:717.88px;font-size:14.50px;font-family:'Liberation Sans',sans-serif;color:#535966;">09:00</div>
<div class="t" style="left:703.92px;top:717.88px;font-size:14.50px;font-family:'Liberation Sans',sans-serif;color:#535966;">12:00</div>
<div class="t" style="left:385.25px;top:742.66px;font-size:14.87px;font-family:'Liberation Sans',sans-serif;color:#535966;">timestamp per 30 minutes</div>
<div class="abs" style="left:814.6px;top:484.79999999999995px;width:17.2px;height:17.2px;border-radius:50%;background:#9b97d9"></div>
<div class="t" style="left:836.65px;top:486.32px;font-size:15.50px;font-family:'Liberation Sans',sans-serif;color:#595959;">Critical</div>
<div class="abs" style="left:814.6px;top:515.3299999999999px;width:17.2px;height:17.2px;border-radius:50%;background:#e55e42"></div>
<div class="t" style="left:836.15px;top:516.86px;font-size:15.50px;font-family:'Liberation Sans',sans-serif;color:#595959;">High</div>
<div class="abs" style="left:814.6px;top:545.86px;width:17.2px;height:17.2px;border-radius:50%;background:#006e9e"></div>
<div class="t" style="left:836.15px;top:547.39px;font-size:15.50px;font-family:'Liberation Sans',sans-serif;color:#595959;">Medium</div>
<div class="abs" style="left:814.6px;top:576.39px;width:17.2px;height:17.2px;border-radius:50%;background:#05cdb3"></div>
<div class="t" style="left:836.15px;top:577.92px;font-size:15.50px;font-family:'Liberation Sans',sans-serif;color:#595959;">Low</div>
<svg class="abs" style="left:0;top:0" width="1800" height="1158" viewBox="0 0 1800 1158">
<rect x="1025.8" y="486.8" width="106.4" height="43.6" fill="#01a66a" stroke="#a8a8a8" stroke-width="1.2"/>
<rect x="1132.2" y="486.8" width="106.4" height="43.6" fill="#40caa5" stroke="#a8a8a8" stroke-width="1.2"/>
<rect x="1238.7" y="486.8" width="106.4" height="43.6" fill="#40caa5" stroke="#a8a8a8" stroke-width="1.2"/>
<rect x="1345.1" y="486.8" width="106.4" height="43.6" fill="#40caa5" stroke="#a8a8a8" stroke-width="1.2"/>
<rect x="1451.6" y="486.8" width="106.4" height="43.6" fill="#a7e4d0" stroke="#a8a8a8" stroke-width="1.2"/>
<rect x="1025.8" y="530.4" width="106.4" height="43.6" fill="#40caa5" stroke="#a8a8a8" stroke-width="1.2"/>
<rect x="1132.2" y="530.4" width="106.4" height="43.6" fill="#a7e4d0" stroke="#a8a8a8" stroke-width="1.2"/>
<rect x="1238.7" y="530.4" width="106.4" height="43.6" fill="#a7e4d0" stroke="#a8a8a8" stroke-width="1.2"/>
<rect x="1345.1" y="530.4" width="106.4" height="43.6" fill="#a7e4d0" stroke="#a8a8a8" stroke-width="1.2"/>
<rect x="1451.6" y="530.4" width="106.4" height="43.6" fill="#e1f7ef" stroke="#a8a8a8" stroke-width="1.2"/>
<rect x="1025.8" y="574.1" width="106.4" height="43.6" fill="#a7e4d0" stroke="#a8a8a8" stroke-width="1.2"/>
<rect x="1132.2" y="574.1" width="106.4" height="43.6" fill="#a7e4d0" stroke="#a8a8a8" stroke-width="1.2"/>
<rect x="1238.7" y="574.1" width="106.4" height="43.6" fill="#e1f7ef" stroke="#a8a8a8" stroke-width="1.2"/>
<rect x="1345.1" y="574.1" width="106.4" height="43.6" fill="#e1f7ef" stroke="#a8a8a8" stroke-width="1.2"/>
<rect x="1451.6" y="574.1" width="106.4" height="43.6" fill="#e1f7ef" stroke="#a8a8a8" stroke-width="1.2"/>
<rect x="1025.8" y="617.7" width="106.4" height="43.6" fill="#e1f7ef" stroke="#a8a8a8" stroke-width="1.2"/>
<rect x="1132.2" y="617.7" width="106.4" height="43.6" fill="#e1f7ef" stroke="#a8a8a8" stroke-width="1.2"/>
<rect x="1238.7" y="617.7" width="106.4" height="43.6" fill="#e1f7ef" stroke="#a8a8a8" stroke-width="1.2"/>
<rect x="1345.1" y="617.7" width="106.4" height="43.6" fill="#e1f7ef" stroke="#a8a8a8" stroke-width="1.2"/>
<rect x="1451.6" y="617.7" width="106.4" height="43.6" fill="#e1f7ef" stroke="#a8a8a8" stroke-width="1.2"/>
<line x1="1017" y1="486.8" x2="1025.8" y2="486.8" stroke="#a8a8a8" stroke-width="1.2"/>
<line x1="1017" y1="530.4" x2="1025.8" y2="530.4" stroke="#a8a8a8" stroke-width="1.2"/>
<line x1="1017" y1="574.1" x2="1025.8" y2="574.1" stroke="#a8a8a8" stroke-width="1.2"/>
<line x1="1017" y1="617.7" x2="1025.8" y2="617.7" stroke="#a8a8a8" stroke-width="1.2"/>
<line x1="1017" y1="661.3" x2="1025.8" y2="661.3" stroke="#a8a8a8" stroke-width="1.2"/>
<line x1="1017" y1="508.6" x2="1025.8" y2="508.6" stroke="#a8a8a8" stroke-width="1.2"/>
<line x1="1017" y1="552.2" x2="1025.8" y2="552.2" stroke="#a8a8a8" stroke-width="1.2"/>
<line x1="1017" y1="595.9" x2="1025.8" y2="595.9" stroke="#a8a8a8" stroke-width="1.2"/>
<line x1="1017" y1="639.5" x2="1025.8" y2="639.5" stroke="#a8a8a8" stroke-width="1.2"/>
<line x1="1025.8" y1="661.3" x2="1025.8" y2="667" stroke="#a8a8a8" stroke-width="1.2"/>
<line x1="1079.0" y1="661.3" x2="1079.0" y2="667" stroke="#a8a8a8" stroke-width="1.2"/>
<line x1="1185.5" y1="661.3" x2="1185.5" y2="667" stroke="#a8a8a8" stroke-width="1.2"/>
<line x1="1291.9" y1="661.3" x2="1291.9" y2="667" stroke="#a8a8a8" stroke-width="1.2"/>
<line x1="1398.3" y1="661.3" x2="1398.3" y2="667" stroke="#a8a8a8" stroke-width="1.2"/>
<line x1="1504.8" y1="661.3" x2="1504.8" y2="667" stroke="#a8a8a8" stroke-width="1.2"/>
</svg>
<div class="t" style="left:959.75px;top:500.97px;font-size:15.00px;font-family:'Liberation Sans',sans-serif;color:#535966;">Medium</div>
<div class="t" style="left:982.00px;top:544.60px;font-size:15.00px;font-family:'Liberation Sans',sans-serif;color:#535966;">High</div>
<div class="t" style="left:967.25px;top:588.23px;font-size:15.00px;font-family:'Liberation Sans',sans-serif;color:#535966;">Critical</div>
<div class="t" style="left:984.50px;top:630.65px;font-size:15.00px;font-family:'Liberation Sans',sans-serif;color:#535966;">Low</div>
<div class="t" style="left:1020.77px;top:666.09px;font-size:14.62px;color:#535966;transform-origin:58.25px 7.31px;transform:rotate(-90deg)">Windows</div>
<div class="t" style="left:1145.96px;top:667.09px;font-size:12.62px;color:#535966;transform-origin:39.50px 6.31px;transform:rotate(-90deg)">RHEL7</div>
<div class="t" style="left:1248.15px;top:666.34px;font-size:14.12px;color:#535966;transform-origin:43.75px 7.06px;transform:rotate(-90deg)">Centos</div>
<div class="t" style="left:1352.59px;top:665.96px;font-size:14.87px;color:#535966;transform-origin:45.75px 7.44px;transform:rotate(-90deg)">Debian</div>
<div class="t" style="left:1456.03px;top:665.59px;font-size:15.62px;color:#535966;transform-origin:48.75px 7.81px;transform:rotate(-90deg)">Ubuntu</div>
<div class="t" style="left:1212.00px;top:745.28px;font-size:14.37px;font-family:'Liberation Sans',sans-serif;color:#535966;">agent.name: Descending</div>
<div class="abs" style="left:1583.8px;top:486.8px;width:16.4px;height:16.4px;border-radius:50%;background:#e1f7ef"></div>
<div class="t" style="left:1607.50px;top:487.93px;font-size:15.50px;font-family:'Liberation Sans',sans-serif;color:#595959;">0 - 250</div>
<div class="abs" style="left:1583.8px;top:517.4699999999999px;width:16.4px;height:16.4px;border-radius:50%;background:#a7e4d0"></div>
<div class="t" style="left:1607.25px;top:518.60px;font-size:15.50px;font-family:'Liberation Sans',sans-serif;color:#595959;">250 - 500</div>
<div class="abs" style="left:1583.8px;top:548.14px;width:16.4px;height:16.4px;border-radius:50%;background:#40caa5"></div>
<div class="t" style="left:1607.25px;top:549.27px;font-size:15.50px;font-family:'Liberation Sans',sans-serif;color:#595959;">500 - 750</div>
<div class="abs" style="left:1583.8px;top:578.81px;width:16.4px;height:16.4px;border-radius:50%;background:#01a66a"></div>
<div class="t" style="left:1607.25px;top:579.94px;font-size:15.50px;font-family:'Liberation Sans',sans-serif;color:#595959;">750 - 1000</div>
<div class="t" style="left:65.45px;top:807.59px;font-size:16.12px;font-family:'Liberation Sans',sans-serif;color:#15171c;">Events</div>
<div class="t" style="left:87.25px;top:856.92px;font-size:13.62px;font-family:'Liberation Sans',sans-serif;font-weight:bold;color:#55585f;">Time</div>
<div class="t" style="left:378.20px;top:854.08px;font-size:14.37px;font-family:'Liberation Sans',sans-serif;font-weight:bold;color:#55585f;">agent.name</div>
<div class="t" style="left:511.20px;top:854.29px;font-size:14.12px;font-family:'Liberation Sans',sans-serif;font-weight:bold;color:#55585f;">data.vulnerability.cve</div>
<div class="t" style="left:705.50px;top:854.29px;font-size:14.12px;font-family:'Liberation Sans',sans-serif;font-weight:bold;color:#55585f;">data.vulnerability.package.name</div>
<div class="t" style="left:1116.50px;top:854.29px;font-size:14.12px;font-family:'Liberation Sans',sans-serif;font-weight:bold;color:#55585f;">data.vulnerability.package.version</div>
<div class="t" style="left:1398.50px;top:854.29px;font-size:14.12px;font-family:'Liberation Sans',sans-serif;font-weight:bold;color:#55585f;">data.vulnerability.severity</div>
<div class="t" style="left:1632.00px;top:853.66px;font-size:14.87px;font-family:'Liberation Sans',sans-serif;font-weight:bold;color:#55585f;">rule.id</div>
<svg class="abs" style="left:122px;top:861px" width="12" height="9" viewBox="0 0 12 9"><path d="M1,2 L11,2 L6,7.3 Z" fill="#0b76c2"/></svg>
<div class="abs" style="left:55px;top:878px;width:1685px;height:1px;background:#eaedf1"></div>
<svg class="abs" style="left:92px;top:903.4px" width="12" height="14" viewBox="0 0 12 14"><path d="M3.2,2.3 L8.6,6.5 L3.2,10.7" fill="none" stroke="#343741" stroke-width="1.3"/></svg>
<div class="t" style="left:109.30px;top:904.73px;font-size:14.90px;font-family:'Liberation Mono',monospace;color:#1a1c21;transform:scaleX(0.9250);transform-origin:0 0;-webkit-text-stroke:0.25px #1a1c21;">Aug 13, 2020 @ 19:21:37.328</div>
<div class="t" style="left:379.00px;top:904.73px;font-size:14.90px;font-family:'Liberation Mono',monospace;color:#0b6cb5;transform:scaleX(0.9250);transform-origin:0 0;-webkit-text-stroke:0.25px #0b6cb5;">Windows</div>
<div class="t" style="left:511.31px;top:904.73px;font-size:14.90px;font-family:'Liberation Mono',monospace;color:#0b6cb5;transform:scaleX(0.9250);transform-origin:0 0;-webkit-text-stroke:0.25px #0b6cb5;">CVE-2020-6524</div>
<div class="t" style="left:706.61px;top:904.73px;font-size:14.90px;font-family:'Liberation Mono',monospace;color:#1a1c21;transform:scaleX(0.9250);transform-origin:0 0;-webkit-text-stroke:0.25px #1a1c21;">Google Chrome</div>
<div class="t" style="left:1117.08px;top:904.73px;font-size:14.90px;font-family:'Liberation Mono',monospace;color:#1a1c21;transform:scaleX(0.9250);transform-origin:0 0;-webkit-text-stroke:0.25px #1a1c21;">80.0.3987.87</div>
<div class="t" style="left:1398.84px;top:904.73px;font-size:14.90px;font-family:'Liberation Mono',monospace;color:#1a1c21;transform:scaleX(0.9250);transform-origin:0 0;-webkit-text-stroke:0.25px #1a1c21;">High</div>
<div class="t" style="left:1633.08px;top:904.73px;font-size:14.90px;font-family:'Liberation Mono',monospace;color:#0b6cb5;transform:scaleX(0.9250);transform-origin:0 0;-webkit-text-stroke:0.25px #0b6cb5;">23505</div>
<div class="abs" style="left:55px;top:948.7px;width:1685px;height:1px;background:#eaedf1"></div>
<svg class="abs" style="left:92px;top:973.2px" width="12" height="14" viewBox="0 0 12 14"><path d="M3.2,2.3 L8.6,6.5 L3.2,10.7" fill="none" stroke="#343741" stroke-width="1.3"/></svg>
<div class="t" style="left:109.30px;top:974.53px;font-size:14.90px;font-family:'Liberation Mono',monospace;color:#1a1c21;transform:scaleX(0.9250);transform-origin:0 0;-webkit-text-stroke:0.25px #1a1c21;">Aug 12, 2020 @ 02:41:31.287</div>
<div class="t" style="left:377.84px;top:974.53px;font-size:14.90px;font-family:'Liberation Mono',monospace;color:#0b6cb5;transform:scaleX(0.9250);transform-origin:0 0;-webkit-text-stroke:0.25px #0b6cb5;">RHEL9</div>
<div class="t" style="left:511.31px;top:974.53px;font-size:14.90px;font-family:'Liberation Mono',monospace;color:#0b6cb5;transform:scaleX(0.9250);transform-origin:0 0;-webkit-text-stroke:0.25px #0b6cb5;">CVE-2020-12888</div>
<div class="t" style="left:705.68px;top:974.53px;font-size:14.90px;font-family:'Liberation Mono',monospace;color:#1a1c21;transform:scaleX(0.9250);transform-origin:0 0;-webkit-text-stroke:0.25px #1a1c21;">kernel</div>
<div class="t" style="left:1117.08px;top:974.53px;font-size:14.90px;font-family:'Liberation Mono',monospace;color:#1a1c21;transform:scaleX(0.9250);transform-origin:0 0;-webkit-text-stroke:0.25px #1a1c21;">3.10.0-862.e17</div>
<div class="t" style="left:1398.84px;top:974.53px;font-size:14.90px;font-family:'Liberation Mono',monospace;color:#1a1c21;transform:scaleX(0.9250);transform-origin:0 0;-webkit-text-stroke:0.25px #1a1c21;">High</div>
<div class="t" style="left:1633.08px;top:974.53px;font-size:14.90px;font-family:'Liberation Mono',monospace;color:#0b6cb5;transform:scaleX(0.9250);transform-origin:0 0;-webkit-text-stroke:0.25px #0b6cb5;">23505</div>
<div class="abs" style="left:55px;top:1018.4px;width:1685px;height:1px;background:#eaedf1"></div>
<svg class="abs" style="left:92px;top:1043.0px" width="12" height="14" viewBox="0 0 12 14"><path d="M3.2,2.3 L8.6,6.5 L3.2,10.7" fill="none" stroke="#343741" stroke-width="1.3"/></svg>
<div class="t" style="left:109.30px;top:1044.33px;font-size:14.90px;font-family:'Liberation Mono',monospace;color:#1a1c21;transform:scaleX(0.9250);transform-origin:0 0;-webkit-text-stroke:0.25px #1a1c21;">Aug 10, 2020 @ 01:27:38.187</div>
<div class="t" style="left:379.00px;top:1044.33px;font-size:14.90px;font-family:'Liberation Mono',monospace;color:#0b6cb5;transform:scaleX(0.9250);transform-origin:0 0;-webkit-text-stroke:0.25px #0b6cb5;">Windows</div>
<div class="t" style="left:511.31px;top:1044.33px;font-size:14.90px;font-family:'Liberation Mono',monospace;color:#0b6cb5;transform:scaleX(0.9250);transform-origin:0 0;-webkit-text-stroke:0.25px #0b6cb5;">CVE-2017-8512</div>
<div class="t" style="left:706.38px;top:1044.33px;font-size:14.90px;font-family:'Liberation Mono',monospace;color:#1a1c21;transform:scaleX(0.9250);transform-origin:0 0;-webkit-text-stroke:0.25px #1a1c21;">Microsoft Office Home and Business 2016</div>
<div class="t" style="left:1117.08px;top:1044.33px;font-size:14.90px;font-family:'Liberation Mono',monospace;color:#1a1c21;transform:scaleX(0.9250);transform-origin:0 0;-webkit-text-stroke:0.25px #1a1c21;">16.0.13029.20344</div>
<div class="t" style="left:1398.84px;top:1044.33px;font-size:14.90px;font-family:'Liberation Mono',monospace;color:#1a1c21;transform:scaleX(0.9250);transform-origin:0 0;-webkit-text-stroke:0.25px #1a1c21;">High</div>
<div class="t" style="left:1633.08px;top:1044.33px;font-size:14.90px;font-family:'Liberation Mono',monospace;color:#0b6cb5;transform:scaleX(0.9250);transform-origin:0 0;-webkit-text-stroke:0.25px #0b6cb5;">23505</div>
<div class="abs" style="left:55px;top:1093.5px;width:1685px;height:1px;background:#eaedf1"></div>
</body></html>
